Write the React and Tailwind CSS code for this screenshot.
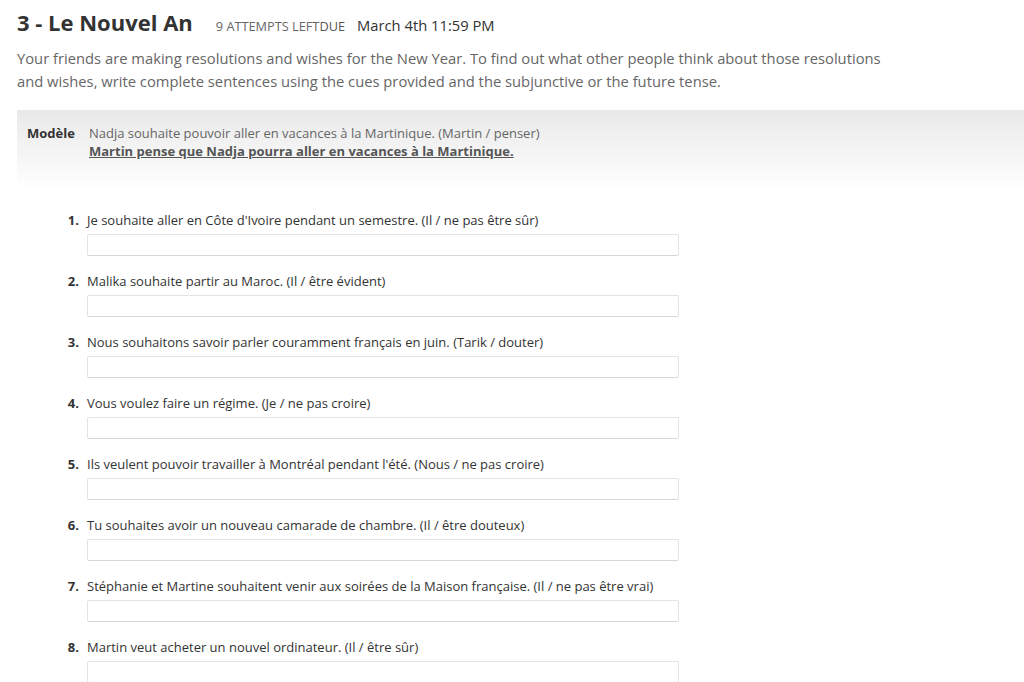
import React from "react";

const questions = [
  "Je souhaite aller en Côte d'Ivoire pendant un semestre. (Il / ne pas être sûr)",
  "Malika souhaite partir au Maroc. (Il / être évident)",
  "Nous souhaitons savoir parler couramment français en juin. (Tarik / douter)",
  "Vous voulez faire un régime. (Je / ne pas croire)",
  "Ils veulent pouvoir travailler à Montréal pendant l'été. (Nous / ne pas croire)",
  "Tu souhaites avoir un nouveau camarade de chambre. (Il / être douteux)",
  "Stéphanie et Martine souhaitent venir aux soirées de la Maison française. (Il / ne pas être vrai)",
  "Martin veut acheter un nouvel ordinateur. (Il / être sûr)",
];

export default function App() {
  return (
    <div className="min-h-[682px] bg-white font-['Open_Sans',sans-serif] text-[#333] overflow-hidden">
      {/* Header */}
      <div className="flex items-baseline pl-[17px] pt-[8px]">
        <h1 className="text-[22px] font-bold leading-[28px] text-[#333]">3 - Le Nouvel An</h1>
        <span className="ml-[23px] text-[12.75px] uppercase text-[#666]">9 attempts left</span>
        <span className="text-[12.75px] uppercase text-[#555]">Due</span>
        <span className="ml-[12px] text-[14.75px] text-[#333]">March 4th 11:59 PM</span>
      </div>

      <p className="pl-[17px] mt-[11px] w-[900px] text-[14.75px] leading-[23px] text-[#666]">
        Your friends are making resolutions and wishes for the New Year. To find out what other people think about those resolutions
        and wishes, write complete sentences using the cues provided and the subjunctive or the future tense.
      </p>

      {/* Modèle */}
      <div className="ml-[17px] mt-[17px] h-[80px] bg-gradient-to-b from-[#e9e9e9] to-white pl-[10px] pt-[14px] flex text-[13px] leading-[18px]">
        <span className="font-bold text-[#333] w-[62px]">Modèle</span>
        <div className="text-[#666]">
          <div>Nadja souhaite pouvoir aller en vacances à la Martinique. (Martin / penser)</div>
          <div className="font-bold underline text-[#555]">Martin pense que Nadja pourra aller en vacances à la Martinique.</div>
        </div>
      </div>

      {/* Questions */}
      <ol className="mt-[21px]">
        {questions.map((q, i) => (
          <li key={i} className="flex flex-col h-[61px]">
            <div className="flex text-[13px] leading-[18px] text-[#333]">
              <span className="w-[87px] shrink-0 text-right pr-[8px] font-bold">{i + 1}.</span>
              <span>{q}</span>
            </div>
            <div className="ml-[87px] mt-[5px] w-[592px] h-[22px] border border-[#e3e3e3] border-b-[#d6d6d6] rounded-[2px] bg-white" />
          </li>
        ))}
      </ol>
    </div>
  );
}
